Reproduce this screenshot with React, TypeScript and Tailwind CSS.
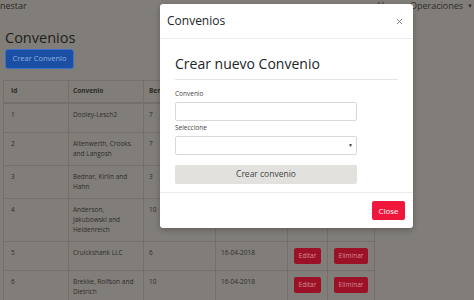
import { X } from 'lucide-react';

interface Row {
  id: number;
  name: string[];
  ben: string;
  date?: string;
}

const rows: Row[] = [
  { id: 1, name: ['Dooley-Lesch2'], ben: '7' },
  { id: 2, name: ['Altenwerth, Crooks', 'and Langosh'], ben: '7' },
  { id: 3, name: ['Bednar, Kirlin and', 'Hahn'], ben: '3' },
  { id: 4, name: ['Anderson,', 'Jakubowski and', 'Heidenreich'], ben: '10' },
  { id: 5, name: ['Cruickshank LLC'], ben: '6', date: '16-04-2018' },
  { id: 6, name: ['Brekke, Rolfson and', 'Dietrich'], ben: '10', date: '16-04-2018' },
];

const font = { fontFamily: '"Open Sans", "Liberation Sans", sans-serif' };

function Page() {
  return (
    <div className="flex flex-col">
      {/* navbar */}
      <div className="flex h-[12px] items-center justify-between text-[9px] leading-[12px] text-[#2a2826]">
        <span>nestar</span>
        <div className="flex items-center pr-[1px] text-[#2f2d2a]">
          <span className="mr-[7px]">Home</span>
          <span>Operaciones</span>
          <span className="ml-[4px] text-[6px]">▼</span>
        </div>
      </div>

      <h2 className="ml-[5px] mt-[16px] text-[14.5px] font-medium leading-[20px] text-[#1f1d1b]">Convenios</h2>
      <div className="ml-[5px] mt-[1px]">
        <button className="flex h-[20px] w-[69px] items-center justify-center rounded-[3px] border border-[#3c70c6] bg-[#1b4fa3] text-[7.5px] text-[#8fb0de]">
          Crear Convenio
        </button>
      </div>

      <table className="ml-[3px] mt-[11px] w-[372px] border-collapse text-[6.5px] leading-[10px] text-[#2e2c29]">
        <thead>
          <tr className="h-[22px] border border-[#73706c] border-b-2">
            <th className="w-[65px] border-x border-[#73706c] px-[7px] text-left font-bold">Id</th>
            <th className="w-[75px] border-x border-[#73706c] px-[4px] text-left font-bold">Convenio</th>
            <th className="w-[72px] border-x border-[#73706c] px-[5px] text-left font-bold">Beneficiarios</th>
            <th className="w-[72px] border-x border-[#73706c] px-[5px] text-left font-bold">Fecha</th>
            <th className="w-[40px] border-x border-[#73706c]"></th>
            <th className="border-x border-[#73706c]"></th>
          </tr>
        </thead>
        <tbody>
          {rows.map((r) => (
            <tr key={r.id} className="border-t border-[#73706c] align-top">
              <td className="border-x border-[#73706c] px-[7px] py-[6px]">{r.id}</td>
              <td className="border-x border-[#73706c] px-[4px] py-[6px]">
                {r.name.map((l) => (
                  <div key={l}>{l}</div>
                ))}
              </td>
              <td className="border-x border-[#73706c] px-[5px] py-[6px]">{r.ben}</td>
              <td className="border-x border-[#73706c] px-[5px] py-[6px]">{r.date ?? ''}</td>
              <td className="border-x border-[#73706c] px-[6px] py-[6px]">
                <div className="flex h-[16px] w-[27px] items-center justify-center rounded-[2px] bg-[#9b1226] text-[#d78a98]">Editar</div>
              </td>
              <td className="border-x border-[#73706c] px-[6px] py-[6px]">
                <div className="flex h-[16px] w-[34px] items-center justify-center rounded-[2px] bg-[#9b1226] text-[#d78a98]">Eliminar</div>
              </td>
            </tr>
          ))}
        </tbody>
      </table>
    </div>
  );
}

function Modal() {
  return (
    <div className="absolute left-[160px] top-[4px] flex w-[253px] flex-col rounded-[3px] bg-white shadow-[0_2px_6px_rgba(0,0,0,0.25)]">
      <div className="flex h-[35px] items-center justify-between border-b border-[#e9ecef] pl-[7px] pr-[9px]">
        <span className="text-[12px] text-[#212529]">Convenios</span>
        <X className="h-[9px] w-[9px] text-[#6c6c6c]" strokeWidth={2.2} />
      </div>
      <div className="flex flex-col px-[15px] pt-[14px]">
        <div className="text-[14px] font-medium leading-[22px] text-[#212529]">Crear nuevo Convenio</div>
        <div className="mt-[4px] h-px w-[223px] bg-[#e5e5e5]" />
        <div className="mt-[9px] text-[6.5px] leading-[9px] text-[#444]">Convenio</div>
        <div className="mt-[4px] h-[19px] w-[182px] rounded-[2px] border border-[#d8d8d8]" />
        <div className="mt-[2px] text-[6.5px] leading-[9px] text-[#444]">Seleccione</div>
        <div className="mt-[4px] flex h-[19px] w-[182px] items-center justify-end rounded-[2px] border border-[#d8d8d8] pr-[3px]">
          <span className="text-[5px] leading-[5px] text-[#333]">▼</span>
        </div>
        <div className="mt-[10px] flex h-[19px] w-[182px] items-center justify-center rounded-[2px] bg-[#e2e1de] text-[8.5px] text-[#444]">
          Crear convenio
        </div>
        <div className="h-[8px]" />
      </div>
      <div className="flex h-[36px] items-center justify-end border-t border-[#e9ecef] pr-[8px]">
        <button className="flex h-[19px] w-[33px] items-center justify-center rounded-[2px] bg-[#f0173d] text-[8px] text-white">
          Close
        </button>
      </div>
    </div>
  );
}

export default function App() {
  return (
    <div className="relative h-[300px] w-[474px] overflow-hidden bg-[#817e79]" style={font}>
      <Page />
      <Modal />
    </div>
  );
}
